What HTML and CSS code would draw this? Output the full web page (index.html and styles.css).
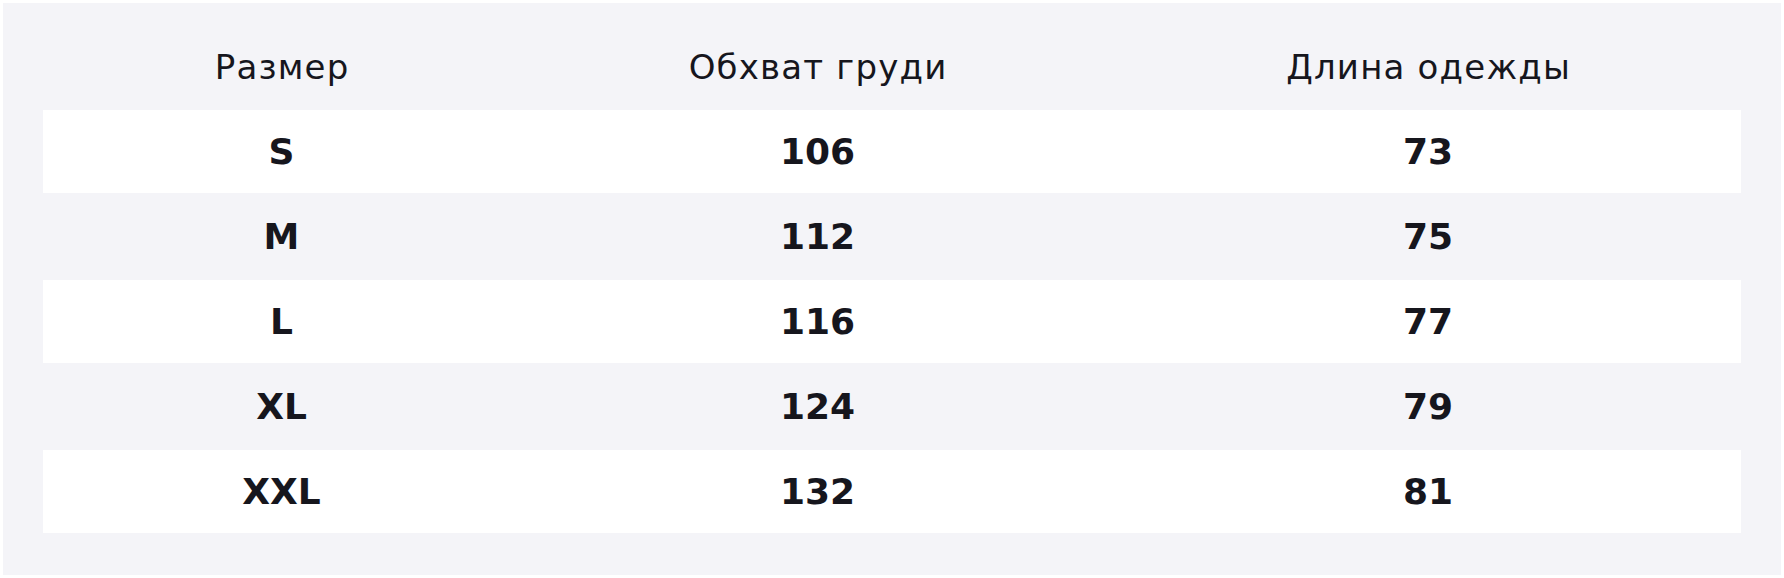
FILE: index.html
```html
<!DOCTYPE html>
<html lang="ru">
<head>
<meta charset="utf-8">
<link rel="stylesheet" href="styles.css">
</head>
<body>
<div class="sheet">
  <div class="table">
    <div class="row head">
      <div class="cell">Размер</div>
      <div class="cell">Обхват груди</div>
      <div class="cell">Длина одежды</div>
    </div>
    <div class="row odd">
      <div class="cell">S</div>
      <div class="cell">106</div>
      <div class="cell">73</div>
    </div>
    <div class="row">
      <div class="cell">M</div>
      <div class="cell">112</div>
      <div class="cell">75</div>
    </div>
    <div class="row odd">
      <div class="cell">L</div>
      <div class="cell">116</div>
      <div class="cell">77</div>
    </div>
    <div class="row">
      <div class="cell">XL</div>
      <div class="cell">124</div>
      <div class="cell">79</div>
    </div>
    <div class="row odd">
      <div class="cell">XXL</div>
      <div class="cell">132</div>
      <div class="cell">81</div>
    </div>
  </div>
</div>
</body>
</html>
```
FILE: styles.css
```css
html, body {
  margin: 0;
  padding: 0;
  background: #ffffff;
}
body {
  padding: 3px;
  font-family: "DejaVu Sans", sans-serif;
  color: #16161d;
}
.sheet {
  background: #f4f4f8;
  padding: 40px;
  height: 572px;
  box-sizing: border-box;
}
.table {
  display: flex;
  flex-direction: column;
  gap: 2px;
  padding: 2px 0;
}
.row {
  display: grid;
  grid-template-columns: 477px 595px 1fr;
  height: 83px;
  align-items: center;
  font-size: 36px;
  font-weight: bold;
}
.row.odd {
  background: #ffffff;
}
.row.head {
  height: 63px;
  align-items: start;
  font-size: 34px;
  font-weight: normal;
  letter-spacing: 1.2px;
}
.row.head .cell {
  padding-top: 2px;
  padding-left: 1.2px;
}
.cell {
  text-align: center;
  white-space: nowrap;
}
```
